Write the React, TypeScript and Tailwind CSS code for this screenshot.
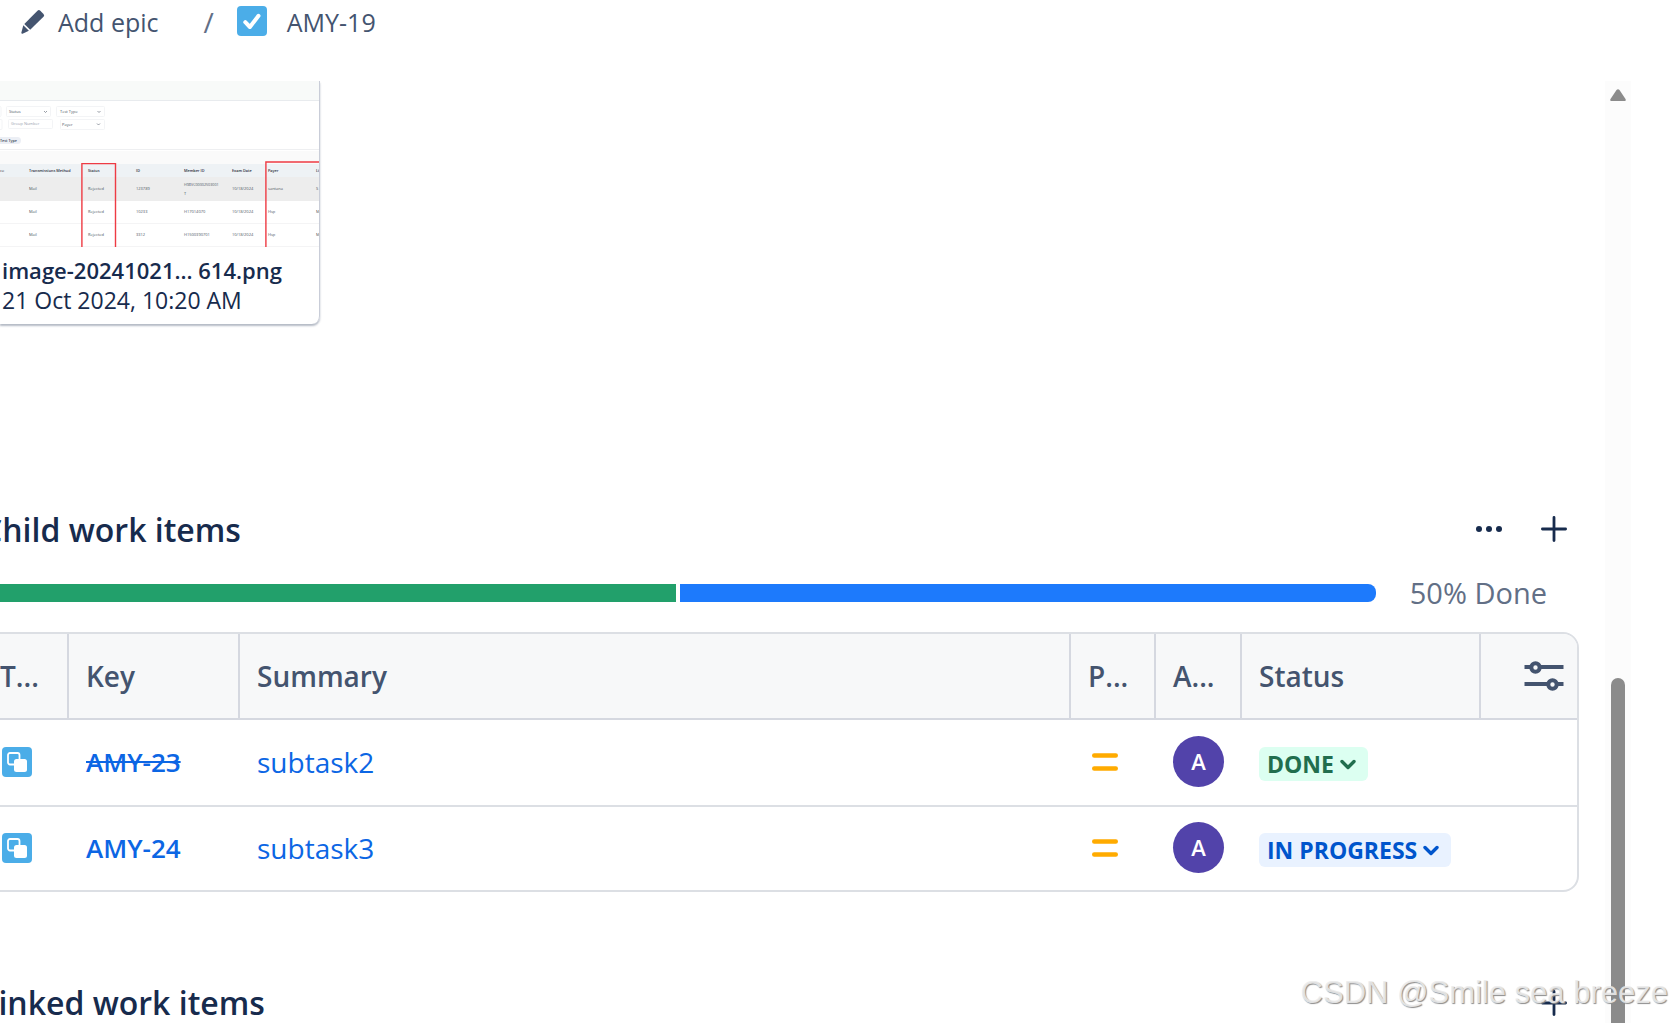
import { useState } from "react";

type WorkItem = {
  key: string;
  summary: string;
  status: "DONE" | "IN PROGRESS";
};

const items: WorkItem[] = [
  { key: "AMY-23", summary: "subtask2", status: "DONE" },
  { key: "AMY-24", summary: "subtask3", status: "IN PROGRESS" },
];

const columns = [
  { label: "T...", title: "Type" },
  { label: "Key", title: "Key" },
  { label: "Summary", title: "Summary" },
  { label: "P...", title: "Priority" },
  { label: "A...", title: "Assignee" },
  { label: "Status", title: "Status" },
];

const thumbRows = [
  { y: 108, cells: ["Mail", "Rejected", "123789", "", "10/18/2024", "santana", "S"] },
  { y: 131, cells: ["Mail", "Rejected", "10233", "H17014070", "10/18/2024", "Hsp", "M"] },
  { y: 154, cells: ["Mail", "Rejected", "3312", "H1500390701", "10/18/2024", "Hsp", "M"] },
];
const thumbCols = [29, 88, 136, 184, 232, 268, 316];
const thumbHeads = ["Transmissions Method", "Status", "ID", "Member ID", "Exam Date", "Payer", "Li"];

function Thumbnail() {
  return (
    <svg width="319" height="166" viewBox="0 0 319 166" className="block" fontSize="4" fill="#4b5563" role="img" aria-label="Attachment preview">
      <rect width="320" height="166" fill="#fff" />
      <rect width="320" height="19" fill="#f8faf9" />
      <path d="M0 19.500H320" stroke="#e8ebee" />
      <g fill="none" stroke="#f3f4f6">
        <rect x="-8" y="25.500" width="9" height="10" rx="1" />
        <rect x="6.500" y="25.500" width="44" height="10" rx="1" />
        <rect x="56.500" y="25.500" width="48" height="10" rx="1" />
        <rect x="-8" y="38.500" width="10" height="10" rx="1" />
        <rect x="8.500" y="38.500" width="44" height="9" rx="1" />
        <rect x="60.500" y="38.500" width="44" height="10" rx="1" />
      </g>
      <path d="M44 30l1.500 1.500L47 30M97.500 30l1.500 1.500 1.500-1.500M97 42.500l1.500 1.500 1.500-1.500" fill="none" stroke="#6b7280" strokeWidth=".7" />
      <text x="9" y="31.500">Status</text>
      <text x="60" y="31.500">Test Type</text>
      <text x="11" y="44" fill="#9ca3af">Group Number</text>
      <text x="62" y="44.500">Payer</text>
      <rect x="-10" y="56" width="31" height="7" rx="3.500" fill="#eceff5" />
      <text x="0" y="61" fontSize="3.700" fontWeight="600" fill="#374151">Test Type</text>
      <path d="M0 68.500H320" stroke="#eeeff1" />
      <rect y="70" width="320" height="13" fill="#fafafa" />
      <rect y="83" width="320" height="13" fill="#eef2f5" />
      <rect y="96" width="320" height="24" fill="#ededed" />
      <path d="M0 142.500H320M0 165.500H320" stroke="#f4f4f5" />
      <text x="0" y="91" fill="#1f2937">ce</text>
      {thumbHeads.map((head, i) => (
        <text key={head} x={thumbCols[i]} y="91" fontSize="3.800" fontWeight="600" fill="#1f2937">{head}</text>
      ))}
      {thumbRows.map(row =>
        row.cells.map((cell, i) => (
          <text key={`${row.y}-${i}`} x={thumbCols[i]} y={row.y + 0.5}>{cell}</text>
        ))
      )}
      <text x="184" y="105" fontSize="3.700">H98VC00002503001</text>
      <text x="184" y="114">T</text>
      <path d="M81.900 166V82.600H115.500V166M265.900 166V81H320" fill="none" stroke="#ee3b44" strokeWidth="1.400" />
    </svg>
  );
}

function SubtaskIcon() {
  return (
    <svg width="30" height="30" viewBox="0 0 30 30" className="ml-0.5 block" aria-label="Subtask">
      <rect width="30" height="30" rx="4" fill="#4bade8" />
      <rect x="6" y="6" width="11.500" height="11.500" rx="2" fill="none" stroke="#fff" strokeWidth="1.800" />
      <rect x="12" y="12" width="13" height="13" rx="2.500" fill="#fff" />
    </svg>
  );
}

function PlusIcon() {
  return (
    <svg width="26" height="26" viewBox="0 0 26 26" fill="none" stroke="#172b4d" strokeWidth="2.800" strokeLinecap="round">
      <path d="M13 1.400v23.200M1.400 13h23.200" />
    </svg>
  );
}

function StatusSelect({ item }: { item: WorkItem }) {
  const [status, setStatus] = useState<string>(item.status);
  const color = status === "DONE" ? "bg-[#dcfff1] text-[#216e4e]" : "bg-[#e9f2ff] text-[#0055cc]";

  return (
    <div className={`relative mt-1 inline-flex h-[34px] rounded-md align-middle ${color}`}>
      <select
        aria-label={`Status of ${item.key}`}
        value={status}
        onChange={e => setStatus(e.target.value)}
        className="field-sizing-content appearance-none bg-transparent pl-2 pr-[34px] text-[23px] font-bold"
      >
        <option>DONE</option>
        <option>IN PROGRESS</option>
      </select>
      <svg width="16" height="12" viewBox="0 0 16 12" className="pointer-events-none absolute right-3 top-3" fill="none" stroke="currentColor" strokeWidth="3.400" strokeLinecap="round" strokeLinejoin="round">
        <path d="M2 2.500l6 6 6-6" />
      </svg>
    </div>
  );
}

export default function App() {
  return (
    <div className="relative flex h-screen flex-col overflow-hidden bg-white font-['Open_Sans','Noto_Sans',sans-serif] text-[#172b4d]">
      {/* Breadcrumb */}
      <nav className="flex h-[81px] shrink-0 items-start pl-5 pt-1.5 text-[25px] leading-8 text-[#44546f]">
        <button className="flex items-center gap-3">
          <svg width="26" height="26" viewBox="0 0 26 26" fill="#44546f">
            <path d="M17.500 1.800a2 2 0 0 1 2.800 0l3.200 3.200a2 2 0 0 1 0 2.800L10.200 20.700 4.300 14.900z" />
            <path d="M3.300 16.200l5.600 5.600-6.400 2.900c-.8.300-1.400-.3-1.100-1.100z" />
          </svg>
          Add epic
        </button>
        <span className="ml-[45px] text-[28px] text-[#626f86]">/</span>
        <svg width="30" height="30" viewBox="0 0 30 30" className="ml-[23px]" aria-label="Task">
          <rect width="30" height="30" rx="4" fill="#4bade8" />
          <path d="M8.300 16.200l4.600 4.800 8.600-11.200" fill="none" stroke="#fff" strokeWidth="4" strokeLinecap="round" strokeLinejoin="round" />
        </svg>
        <a href="#amy-19" className="ml-5">AMY-19</a>
      </nav>

      <div className="flex min-h-0 flex-1 pr-[41px]">
        <main className="min-w-0 flex-1 overflow-hidden pr-[26px]">
          {/* Attachment card */}
          <figure className="w-[320px] rounded-br-lg border-r border-[#c9cdd8] shadow-[0_2px_2px_rgba(9,30,66,0.3)]">
            <Thumbnail />
            <figcaption className="h-[77px] pl-0.5 pt-2 text-[23px] leading-[30px]">
              <div className="whitespace-nowrap text-[22px] font-semibold">image-20241021... 614.png</div>
              <div>21 Oct 2024, 10:20 AM</div>
            </figcaption>
          </figure>

          {/* Child work items */}
          <section className="-ml-[19px] mt-[181px]">
            <div className="flex h-12 items-center justify-between pl-px pr-3">
              <h2 className="pt-0.5 text-[32px] font-semibold leading-[48px]">Child work items</h2>
              <div className="flex items-center gap-[39px]">
                <button aria-label="More actions">
                  <svg width="26" height="26" viewBox="0 0 26 26" fill="#172b4d">
                    <circle cx="3" cy="13" r="3" />
                    <circle cx="13" cy="13" r="3" />
                    <circle cx="23" cy="13" r="3" />
                  </svg>
                </button>
                <button aria-label="Add child work item"><PlusIcon /></button>
              </div>
            </div>

            <div className="mt-5 flex h-10 items-center gap-[34px] pr-8">
              <div className="flex h-[18px] flex-1 gap-1 overflow-hidden rounded-lg">
                <div className="flex-1 bg-[#22a06b]" />
                <div className="flex-1 bg-[#1d7afc]" />
              </div>
              <span className="text-[29px] leading-10 text-[#626f86]">50% Done</span>
            </div>

            <div className="mt-[19px] overflow-hidden rounded-2xl border-2 border-[#dcdfe4]">
              <table className="w-full table-fixed border-separate border-spacing-0 text-left">
                <colgroup>
                  <col className="w-[86px]" />
                  <col className="w-[171px]" />
                  <col />
                  <col className="w-[85px]" />
                  <col className="w-[86px]" />
                  <col className="w-[239px]" />
                  <col className="w-[96px]" />
                </colgroup>
                <thead className="bg-[#f7f8f9] text-[28px] leading-9 text-[#44546f]">
                  <tr className="h-[86px]">
                    {columns.map(col => (
                      <th key={col.title} title={col.title} className="whitespace-nowrap border-b-2 border-r-2 border-[#d5d8e0] px-[17px] font-semibold">
                        {col.label}
                      </th>
                    ))}
                    <th className="border-b-2 border-[#d5d8e0] pr-[13px]">
                      <button aria-label="Configure columns" className="ml-auto block">
                        <svg width="40" height="30" viewBox="0 0 40 30" fill="none" stroke="#44546f" strokeWidth="4">
                          <path d="M.5 6H7M16 6h23.500M.5 23H24M33 23h6.500" />
                          <circle cx="11.500" cy="6.500" r="4.200" />
                          <circle cx="28.500" cy="23.500" r="4.200" />
                        </svg>
                      </button>
                    </th>
                  </tr>
                </thead>
                <tbody className="[&>tr:first-child>td]:border-b-2 [&>tr>td]:border-[#dcdfe4]">
                  {items.map(item => (
                    <tr key={item.key} className="h-[83px] first:h-[87px] [&>td]:pb-0.5">
                      <td className="px-[17px]"><SubtaskIcon /></td>
                      <td className="px-[17px]">
                        <a href={`#${item.key}`} className={`text-[26px] font-semibold leading-10 text-[#0c66e4] ${item.status === "DONE" ? "line-through" : ""}`}>
                          {item.key}
                        </a>
                      </td>
                      <td className="px-[17px]">
                        <a href={`#${item.key}`} className="text-[28px] leading-10 text-[#0c66e4]">{item.summary}</a>
                      </td>
                      <td className="px-[21px]">
                        <svg width="26" height="18" viewBox="0 0 26 18" stroke="#ffab00" strokeWidth="4.400" strokeLinecap="round" aria-label="Medium">
                          <path d="M2.200 2.500h21.600M2.200 15.500h21.600" />
                        </svg>
                      </td>
                      <td className="px-[17px]">
                        <div className="flex size-[51px] items-center justify-center rounded-full bg-[#5243aa] text-[22px] font-semibold text-white">A</div>
                      </td>
                      <td className="pl-[17px]"><StatusSelect item={item} /></td>
                      <td />
                    </tr>
                  ))}
                </tbody>
              </table>
            </div>
          </section>

          {/* Linked work items */}
          <section className="-ml-[19px] mt-[87px] flex h-12 items-center justify-between pr-3">
            <h2 className="text-[32px] font-semibold leading-[48px]">Linked work items</h2>
            <button aria-label="Link work item"><PlusIcon /></button>
          </section>
        </main>

        {/* Scrollbar */}
        <div className="flex w-[26px] shrink-0 flex-col items-center bg-[#fcfcfc] pt-2">
          <svg width="16" height="12" viewBox="0 0 16 12" fill="#8b8b8b">
            <path d="M6.500 1a2 2 0 0 1 3 0l6 9c.6 1 .2 2-1 2h-13c-1.200 0-1.600-1-1-2z" />
          </svg>
          <div className="mt-[577px] w-3.5 flex-1 rounded-t-full bg-[#8b8b8b]" />
        </div>
      </div>

      <div className="pointer-events-none absolute bottom-3 right-1 font-['Liberation_Sans',sans-serif] text-[31px] leading-9 text-[#ececec]/90 [text-shadow:1px_1px_1px_#8c8c8c]">
        CSDN @Smile sea breeze
      </div>
    </div>
  );
}
